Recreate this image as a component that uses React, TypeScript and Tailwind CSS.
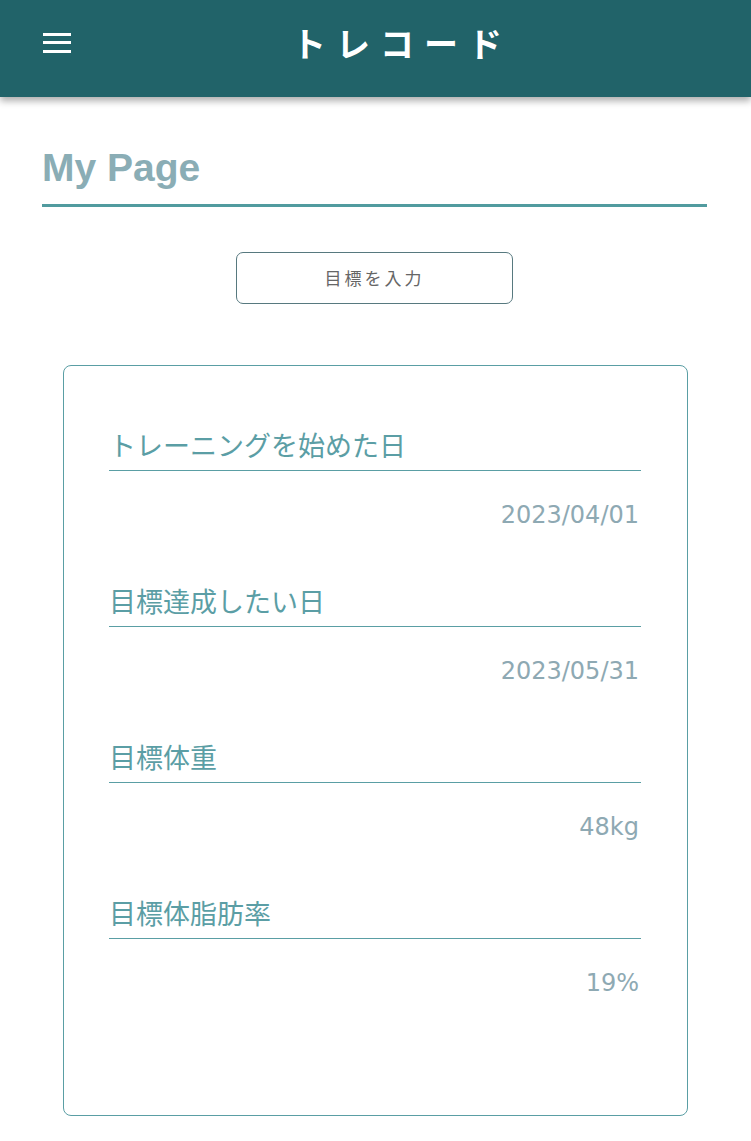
import React from 'react'

const goals = [
  { label: 'トレーニングを始めた日', value: '2023/04/01' },
  { label: '目標達成したい日', value: '2023/05/31' },
  { label: '目標体重', value: '48kg' },
  { label: '目標体脂肪率', value: '19%' },
]

const jp = { fontFamily: '"Noto Sans CJK JP", "Noto Sans", sans-serif' }

const Header: React.FC = () => (
  <header className="relative z-10 flex h-[97px] items-center bg-[#216369] pl-[43px] pr-[42px] pb-[12px] shadow-[0_4px_7px_rgba(0,0,0,0.32)]">
    <button className="flex h-[20px] w-[28px] flex-col justify-between" aria-label="menu">
      <span className="block h-[3px] w-full bg-white" />
      <span className="block h-[3px] w-full bg-white" />
      <span className="block h-[3px] w-full bg-white" />
    </button>
    <h1
      className="flex-1 pl-[24px] text-center text-[34px] font-bold tracking-[10px] text-white"
      style={jp}
    >
      トレコード
    </h1>
  </header>
)

const GoalRow: React.FC<{ label: string; value: string; last?: boolean }> = ({
  label,
  value,
  last,
}) => (
  <div className={last ? '' : 'mb-[54px]'}>
    <div
      className="border-b border-[#5a9ea4] pb-[7px] text-[27px] leading-[36px] text-[#5b9ea5]"
      style={jp}
    >
      {label}
    </div>
    <div
      className="mt-[30px] pr-[2px] text-right text-[24px] leading-[28px] text-[#8ea9b3]"
      style={{ fontFamily: '"DejaVu Sans", sans-serif' }}
    >
      {value}
    </div>
  </div>
)

export default function App() {
  return (
    <div className="min-h-[1141px] bg-white">
      <Header />

      <main className="pl-[42px] pr-[44px]">
        <h2
          className="mt-[49px] border-b-[3px] border-[#519b9f] pb-[14px] text-[39px] font-bold leading-[44px] text-[#8aadb5]"
          style={{ fontFamily: '"Liberation Sans", Arial, sans-serif' }}
        >
          My Page
        </h2>

        <div className="mt-[45px] flex justify-center">
          <button
            className="h-[52px] w-[277px] rounded-[7px] border border-[#57797f] text-[17px] tracking-[3px] text-[#666]"
            style={jp}
          >
            目標を入力
          </button>
        </div>
      </main>

      <section className="mx-auto mt-[61px] w-[625px] rounded-[8px] border border-[#5a9ea4] pl-[45px] pr-[46px] pt-[61px] pb-[118px]">
        {goals.map((g, i) => (
          <GoalRow key={g.label} label={g.label} value={g.value} last={i === goals.length - 1} />
        ))}
      </section>
    </div>
  )
}
